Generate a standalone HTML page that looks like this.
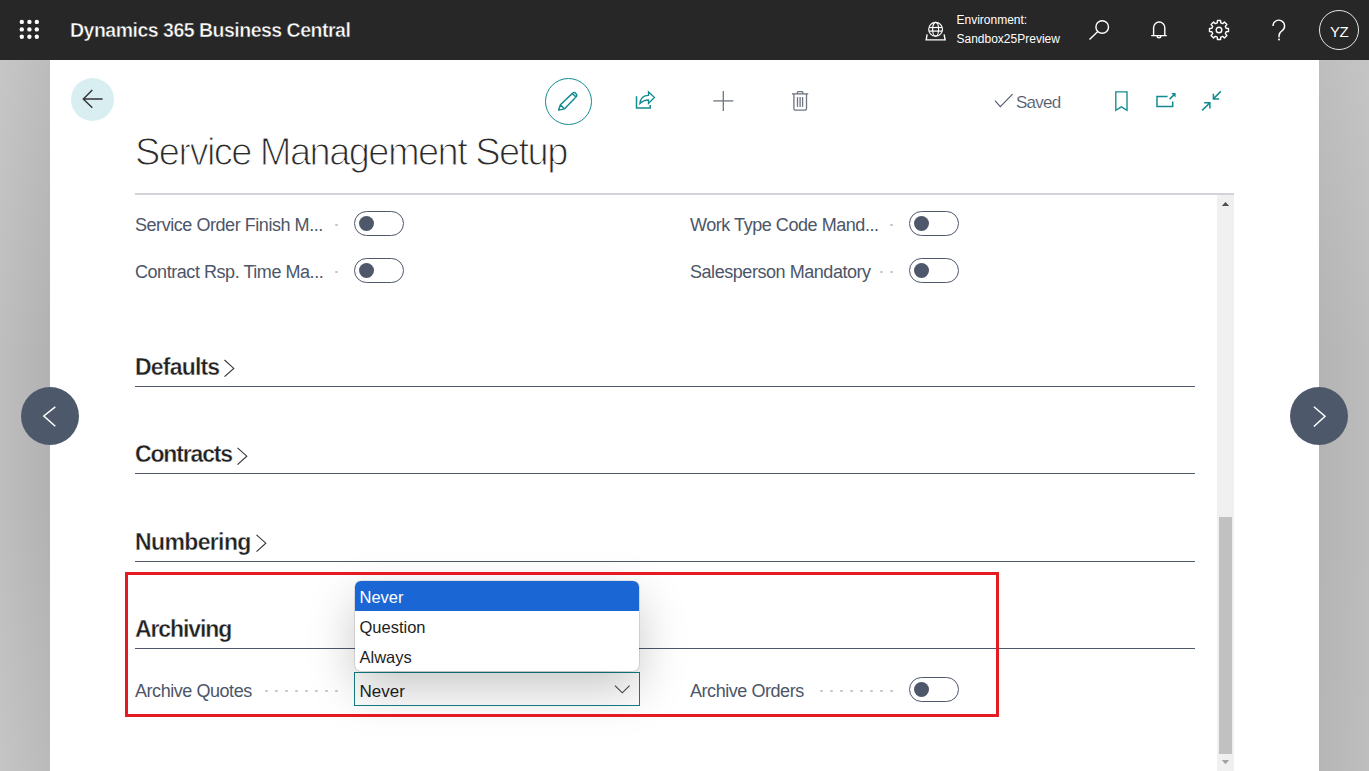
<!DOCTYPE html>
<html><head><meta charset="utf-8">
<style>
*{box-sizing:border-box;margin:0;padding:0}
html,body{width:1369px;height:771px;overflow:hidden;background:#bdbdbd;font-family:"Liberation Sans",sans-serif}
.abs{position:absolute}
.t{position:absolute;white-space:nowrap;line-height:1}
#lside{left:0;top:60px;width:50px;height:711px;background:linear-gradient(180deg,rgba(255,255,255,0.13),rgba(255,255,255,0) 42%,rgba(255,255,255,0) 62%,rgba(255,255,255,0.11)),linear-gradient(90deg,#bebebe,#b2b2b2)}
#rside{left:1319px;top:60px;width:50px;height:711px;background:linear-gradient(180deg,rgba(255,255,255,0.13),rgba(255,255,255,0) 42%,rgba(255,255,255,0) 62%,rgba(255,255,255,0.03)),linear-gradient(90deg,#b4b4b4,#bcbcbc)}
#hdr{left:0;top:0;width:1369px;height:60px;background:#272727}
#card{left:50px;top:60px;width:1269px;height:711px;background:#fff}
.lbl{font-size:18px;color:#4c5668;letter-spacing:-0.45px}
.sec{font-size:23px;font-weight:bold;color:#212121;letter-spacing:-0.8px;-webkit-text-stroke:0.35px #fff}
.secline{position:absolute;left:135px;width:1060px;height:1px;background:#4e586a}
.tog{position:absolute;width:50px;height:25px;border:1.3px solid #4e586a;border-radius:13px}
.tog i{position:absolute;left:3.7px;top:4px;width:15px;height:15px;border-radius:50%;background:#4e586a}
.dot{position:absolute;width:2.8px;height:2.8px;border-radius:50%;background:#c3c5ca;margin:-0.2px 0 0 -0.2px}
</style></head><body>
<div id="hdr" class="abs"></div>
<div id="lside" class="abs"></div>
<div id="rside" class="abs"></div>
<div id="card" class="abs"></div>

<!-- header -->
<svg class="abs" style="left:0;top:0" width="60" height="60">
 <g fill="#fff">
  <circle cx="21.8" cy="21.9" r="2.2"/><circle cx="29.4" cy="21.9" r="2.2"/><circle cx="36.8" cy="21.9" r="2.2"/>
  <circle cx="21.8" cy="29.4" r="2.2"/><circle cx="29.4" cy="29.4" r="2.2"/><circle cx="36.8" cy="29.4" r="2.2"/>
  <circle cx="21.8" cy="36.8" r="2.2"/><circle cx="29.4" cy="36.8" r="2.2"/><circle cx="36.8" cy="36.8" r="2.2"/>
 </g>
</svg>
<div class="t" style="left:70px;top:21.2px;font-size:19.5px;font-weight:bold;color:#fff;letter-spacing:-0.5px;-webkit-text-stroke:0.45px #272727">Dynamics 365 Business Central</div>

<svg class="abs" style="left:920px;top:14px" width="32" height="32">
 <g fill="none" stroke="#fff" stroke-width="1.2">
  <circle cx="15.6" cy="15.2" r="6.9"/>
  <ellipse cx="15.6" cy="15.2" rx="3" ry="6.9"/>
  <line x1="9" y1="13.5" x2="22.2" y2="13.5"/><line x1="9" y1="17.1" x2="22.2" y2="17.1"/>
  <path stroke-width="1.4" d="M7.1 20.4 L6.2 25.9 H25.1 L24.1 20.4"/>
 </g>
</svg>
<div class="t" style="left:956.5px;top:14.2px;font-size:12px;color:#fff">Environment:</div>
<div class="t" style="left:956.5px;top:33.4px;font-size:12px;color:#fff">Sandbox25Preview</div>

<svg class="abs" style="left:1080px;top:5px" width="160" height="50">
 <g fill="none" stroke="#fff" stroke-width="1.4">
  <circle cx="22.2" cy="22" r="6.3"/>
  <line x1="17.8" y1="26.5" x2="9.5" y2="34.5"/>
  <path d="M73.6 30.6 V22.6 a5.6 5.6 0 0 1 11.2 0 V30.6 M71.2 30.6 H86.8"/>
  <path d="M77.2 31.1 a1.8 1.8 0 0 0 3.6 0"/>
 </g>
</svg>
<svg class="abs" style="left:1203px;top:13.8px" width="32" height="32" viewBox="0 0 32 32">
 <g fill="none" stroke="#fff" stroke-width="1.4">
  <path stroke-linejoin="round" d="M14.26 8.9 L14.44 6.5 L17.56 6.5 L17.74 8.9 L19.60 9.66 L21.42 8.10 L23.90 10.58 L22.34 12.40 L23.10 14.26 L25.50 14.44 L25.50 17.56 L23.10 17.74 L22.34 19.60 L23.90 21.42 L21.42 23.90 L19.60 22.34 L17.74 23.10 L17.56 25.50 L14.44 25.50 L14.26 23.10 L12.40 22.34 L10.58 23.90 L8.10 21.42 L9.66 19.60 L8.90 17.74 L6.50 17.56 L6.50 14.44 L8.90 14.26 L9.66 12.40 L8.10 10.58 L10.58 8.10 L12.40 9.66Z"/>
  <circle cx="16" cy="16" r="2.8"/>
 </g>
</svg>
<svg class="abs" style="left:1265px;top:14px" width="28" height="32">
 <g fill="none" stroke="#fff" stroke-width="1.4">
  <path d="M8 12 a5.8 5.8 0 1 1 9 4.8 c-2 1.4 -3 2.6 -3 5.2 v1.6"/>
 </g>
 <circle cx="14" cy="25.6" r="1" fill="#fff"/>
</svg>
<div class="abs" style="left:1319px;top:10px;width:40px;height:40px;border:1.2px solid #e6e6e6;border-radius:50%"></div>
<div class="t" style="left:1330px;top:24.3px;font-size:15px;color:#fff;letter-spacing:-0.6px">YZ</div>

<!-- action bar -->
<div class="abs" style="left:71px;top:78px;width:43px;height:43px;border-radius:50%;background:#d8eef1"></div>
<svg class="abs" style="left:70px;top:78px" width="44" height="44">
 <g fill="none" stroke="#333" stroke-width="1.4">
  <path d="M22.3 12 L13.3 21 L22.3 29.8 M13.6 21 H32.6"/>
 </g>
</svg>

<div class="abs" style="left:545px;top:78px;width:47px;height:47px;border:1.5px solid #138b90;border-radius:50%"></div>
<svg class="abs" style="left:545px;top:78px" width="47" height="47">
 <g fill="none" stroke="#138b90" stroke-width="1.45" stroke-linejoin="round">
  <path d="M13.6 32.1 L15.4 26.8 L27.4 15.4 A2.47 2.47 0 0 1 30.9 18.9 L19.4 30.9 Z M15.4 26.8 L19.4 30.9 M27.4 15.4 L30.9 18.9"/>
 </g>
</svg>
<svg class="abs" style="left:630px;top:86px" width="30" height="30">
 <g fill="none" stroke="#138b90" stroke-width="1.5">
  <path d="M6.5 10.2 V21.9 H20.2 V19.1"/>
  <path stroke-width="1.35" stroke-linejoin="miter" d="M9.9 17.6 C10.3 12.2 13.5 9.3 18.5 9.3 V5.8 L24.4 11.6 L18.5 17.4 V14 C14.8 14 12.2 15.3 9.9 17.6 Z"/>
 </g>
</svg>
<svg class="abs" style="left:710px;top:88px" width="28" height="26">
 <g stroke="#6e7580" stroke-width="1.3">
  <line x1="13.3" y1="2.9" x2="13.3" y2="22.9"/><line x1="3.3" y1="12.9" x2="23.3" y2="12.9"/>
 </g>
</svg>
<svg class="abs" style="left:788px;top:88px" width="24" height="26">
 <g fill="none" stroke="#6e7580" stroke-width="1.3">
  <path d="M4 5.9 H20.2"/>
  <path d="M9.3 5.9 V4.6 a1 1 0 0 1 1 -1 H13.9 a1 1 0 0 1 1 1 V5.9"/>
  <path d="M5.9 5.9 V20.4 a1.8 1.8 0 0 0 1.8 1.8 H16.7 a1.8 1.8 0 0 0 1.8 -1.8 V5.9"/>
  <line x1="9.5" y1="9.1" x2="9.5" y2="18.9"/><line x1="12.1" y1="9.1" x2="12.1" y2="18.9"/><line x1="14.6" y1="9.1" x2="14.6" y2="18.9"/>
 </g>
</svg>

<svg class="abs" style="left:990px;top:88px" width="26" height="24">
 <path d="M5 12.6 L10.3 18.6 L22.6 6.2" fill="none" stroke="#4f5a6b" stroke-width="1.15"/>
</svg>
<div class="t" style="left:1016px;top:94.3px;font-size:17px;color:#4f5a6b;letter-spacing:-0.75px;-webkit-text-stroke:0.12px #fff">Saved</div>

<svg class="abs" style="left:1110px;top:86px" width="120" height="30">
 <path d="M61.3 7.1 L65.6 7.1 L65.6 11.4 Z" fill="#138b90"/>
 <g fill="none" stroke="#138b90" stroke-width="1.5">
  <path stroke-width="1.35" d="M5.8 5.8 H17 V24.4 L11.4 20.9 L5.8 24.4 Z"/>
  <path d="M57.6 10.4 H47 V20.6 H62.7 V15.6 M59.6 13.1 L64.2 8.6"/>
  <path d="M92.2 24.4 L99.4 17.2 M94.2 16.8 H99.9 V22.4 M110.8 5.4 L103.6 12.6 M103.4 7.8 V13 H109.2"/>
 </g>
</svg>

<!-- title -->
<div class="t" style="left:135px;top:133px;font-size:38px;color:#2a2a2a;letter-spacing:-1.55px;-webkit-text-stroke:1.1px #fff;paint-order:normal">Service Management Setup</div>
<div class="abs" style="left:135px;top:193px;width:1099px;height:2px;background:#d1d3d9"></div>

<!-- scrollbar -->
<div class="abs" style="left:1217px;top:195px;width:17px;height:576px;background:#f0f0f0"></div>
<div class="abs" style="left:1219px;top:517px;width:13px;height:237px;background:#c1c1c1"></div>
<svg class="abs" style="left:1217px;top:195px" width="17" height="576">
 <path d="M4.8 11.1 L8.5 6.9 L12.2 11.1 Z" fill="#505050"/>
 <path d="M4.8 565 L8.5 569.2 L12.2 565 Z" fill="#a3a3a3"/>
</svg>

<!-- fields -->
<div class="t lbl" style="left:135px;top:215.7px">Service Order Finish M...</div>
<div class="dot" style="left:335.6px;top:223.8px"></div>
<div class="tog" style="left:354px;top:211px"><i></i></div>
<div class="t lbl" style="left:690px;top:215.7px">Work Type Code Mand...</div>
<div class="dot" style="left:890.3px;top:223.8px"></div>
<div class="tog" style="left:909px;top:211px"><i></i></div>

<div class="t lbl" style="left:135px;top:262.7px">Contract Rsp. Time Ma...</div>
<div class="dot" style="left:335.6px;top:270.8px"></div>
<div class="tog" style="left:354px;top:258px"><i></i></div>
<div class="t lbl" style="left:690px;top:262.7px">Salesperson Mandatory</div>
<div class="dot" style="left:880px;top:270.8px"></div><div class="dot" style="left:890.3px;top:270.8px"></div>
<div class="tog" style="left:909px;top:258px"><i></i></div>

<!-- sections -->
<div class="t sec" style="left:135px;top:355.7px">Defaults</div>
<svg class="abs" style="left:220px;top:356px" width="20" height="24"><path d="M4.5 4 L13.8 12.4 L4.5 20.7" fill="none" stroke="#333" stroke-width="1.1"/></svg>
<div class="secline" style="top:386px"></div>

<div class="t sec" style="left:135px;top:443.4px;letter-spacing:-1.15px">Contracts</div>
<svg class="abs" style="left:233px;top:444px" width="20" height="24"><path d="M4.5 3.8 L13.8 12.2 L4.5 20.6" fill="none" stroke="#333" stroke-width="1.1"/></svg>
<div class="secline" style="top:473px"></div>

<div class="t sec" style="left:135px;top:530.5px;letter-spacing:-0.63px">Numbering</div>
<svg class="abs" style="left:252px;top:531px" width="20" height="24"><path d="M4.5 3.8 L13.8 12.2 L4.5 20.6" fill="none" stroke="#333" stroke-width="1.1"/></svg>
<div class="secline" style="top:561px"></div>

<div class="t sec" style="left:135px;top:618.2px;letter-spacing:-1.1px">Archiving</div>
<div class="secline" style="top:648px"></div>

<div class="t lbl" style="left:135px;top:681.9px">Archive Quotes</div>
<div class="dot" style="left:265px;top:689.7px"></div><div class="dot" style="left:275px;top:689.7px"></div><div class="dot" style="left:285px;top:689.7px"></div><div class="dot" style="left:295px;top:689.7px"></div><div class="dot" style="left:305px;top:689.7px"></div><div class="dot" style="left:315px;top:689.7px"></div><div class="dot" style="left:325px;top:689.7px"></div><div class="dot" style="left:335px;top:689.7px"></div>

<div class="t lbl" style="left:690px;top:681.9px">Archive Orders</div>
<div class="dot" style="left:820px;top:689.7px"></div><div class="dot" style="left:830px;top:689.7px"></div><div class="dot" style="left:840px;top:689.7px"></div><div class="dot" style="left:850px;top:689.7px"></div><div class="dot" style="left:860px;top:689.7px"></div><div class="dot" style="left:870px;top:689.7px"></div><div class="dot" style="left:880px;top:689.7px"></div><div class="dot" style="left:890px;top:689.7px"></div>
<div class="tog" style="left:909px;top:677px"><i></i></div>

<!-- select -->
<div class="abs" style="left:354px;top:672px;width:286px;height:34px;border:1.2px solid #127f86;background:#fff"></div>
<div class="t" style="left:359.5px;top:683.1px;font-size:17px;color:#1e1e1e">Never</div>
<svg class="abs" style="left:610px;top:680px" width="24" height="20"><path d="M5 5.6 L12.3 12.8 L19.6 5.6" fill="none" stroke="#444" stroke-width="1.1"/></svg>

<!-- dropdown -->
<div class="abs" style="left:355px;top:581px;width:284px;height:90px;border-radius:6px;background:#fff;box-shadow:0 18px 48px rgba(0,0,0,0.22),0 0 0 0.6px rgba(0,0,0,0.18);overflow:hidden">
 <div class="abs" style="left:0;top:0;width:284px;height:29.5px;background:#1a66d4"></div>
</div>
<div class="t" style="left:359.5px;top:588.8px;font-size:16.5px;color:#fff">Never</div>
<div class="t" style="left:359.5px;top:618.7px;font-size:16.5px;color:#1e1e1e">Question</div>
<div class="t" style="left:359.5px;top:648.5px;font-size:16.5px;color:#1e1e1e">Always</div>

<!-- red highlight -->
<div class="abs" style="left:125px;top:572px;width:874px;height:145px;border:3px solid #e41b23"></div>

<!-- nav circles -->
<div class="abs" style="left:21px;top:386.5px;width:58px;height:58px;border-radius:50%;background:#4d586b"></div>
<svg class="abs" style="left:21px;top:386.5px" width="58" height="58"><path d="M34.3 19.8 L22.8 29 L34.3 39.2" fill="none" stroke="#fff" stroke-width="1.5"/></svg>
<div class="abs" style="left:1290px;top:386.5px;width:58px;height:58px;border-radius:50%;background:#4d586b"></div>
<svg class="abs" style="left:1290px;top:386.5px" width="58" height="58"><path d="M23.9 19.7 L35 29.3 L23.9 39.5" fill="none" stroke="#fff" stroke-width="1.5"/></svg>
</body></html>
